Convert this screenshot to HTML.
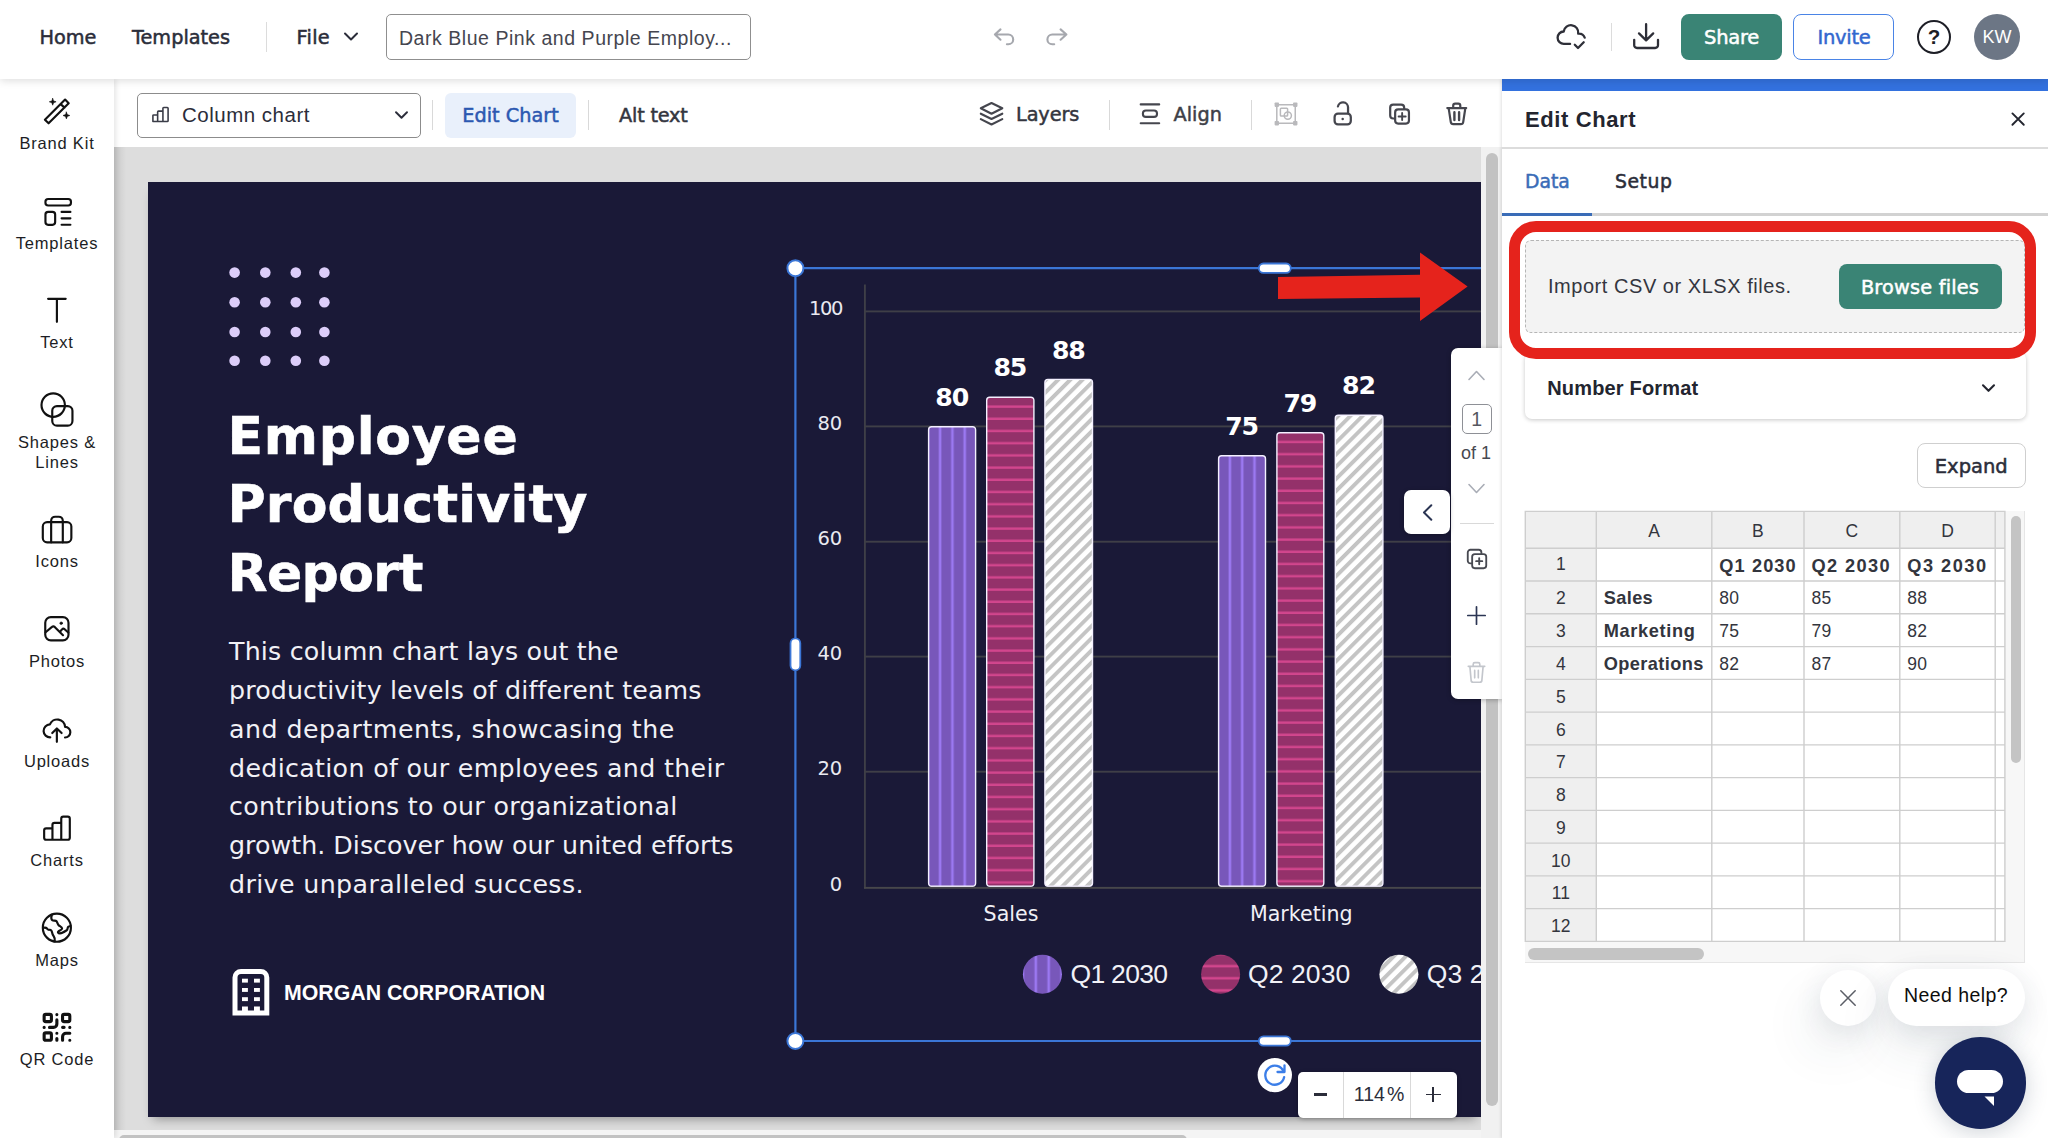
<!DOCTYPE html>
<html lang="en">
<head>
<meta charset="utf-8">
<title>Edit Chart</title>
<style>
*{box-sizing:border-box;margin:0;padding:0}
html,body{width:2048px;height:1138px;overflow:hidden;background:#fff}
body{position:relative;font-family:"Liberation Sans",sans-serif;color:#2b2d3a}
.a{position:absolute}
.t{position:absolute;white-space:nowrap;line-height:1}
.dj{font-family:"DejaVu Sans","Liberation Sans",sans-serif}
.m{font-family:"DejaVu Sans","Liberation Sans",sans-serif;-webkit-text-stroke:0.5px currentColor}
svg{position:absolute;overflow:visible}
.ic{fill:none;stroke:#2b2d3a;stroke-width:1.6;stroke-linecap:round;stroke-linejoin:round}

/* ---------- frame ---------- */
#topbar{left:0;top:0;width:2048px;height:79px;background:#fff;box-shadow:0 2px 8px rgba(0,0,0,.13);z-index:30}
#sidebar{left:0;top:79px;width:114px;height:1059px;background:#fff;z-index:20;box-shadow:2px 0 5px rgba(0,0,0,.10)}
#toolbar{left:114px;top:79px;width:1388px;height:68px;background:#fff;z-index:10}
#canvas{left:114px;top:147px;width:1388px;height:991px;background:#dddddd;overflow:hidden}
#panel{left:1502px;top:79px;width:546px;height:1059px;background:#fff;z-index:15;box-shadow:-1px 0 3px rgba(0,0,0,.12)}

.sb{position:absolute;left:0;width:114px;text-align:center;font-size:16.5px;color:#1c1d24;line-height:20px;letter-spacing:.8px}
</style>
</head>
<body>

<!-- ================= TOP BAR ================= -->
<div id="topbar" class="a">
  <div class="t m" style="left:39.5px;top:28.1px;font-size:19.3px;color:#2b2d3a">Home</div>
  <div class="t m" style="left:132px;top:28.1px;font-size:19.3px;color:#2b2d3a">Templates</div>
  <div class="a" style="left:266px;top:22px;width:1px;height:30px;background:#dcdcdc"></div>
  <div class="t m" style="left:296.5px;top:28.1px;font-size:19.3px;color:#2b2d3a;letter-spacing:0.3px">File</div>
  <svg style="left:343px;top:31px" width="16" height="12" viewBox="0 0 16 12"><path class="ic" style="stroke-width:2" d="M2 2.5 L8 8.5 L14 2.5"/></svg>
  <div class="a" style="left:386px;top:14px;width:365px;height:46px;border:1.5px solid #8f8f8f;border-radius:5px"></div>
  <div class="t" style="left:399px;top:28.8px;font-size:19.5px;color:#45464f;letter-spacing:0.54px">Dark Blue Pink and Purple Employ...</div>

  <!-- undo / redo -->
  <svg style="left:993px;top:27px" width="24" height="20" viewBox="0 0 24 20"><path class="ic" style="stroke:#a6a8ae;stroke-width:2.1" d="M7.5 2.4 L1.9 7.5 L7.5 12.7 M1.9 7.5 H15.3 a4.9 4.9 0 0 1 0 9.8 H13.9"/></svg>
  <svg style="left:1045px;top:27px" width="24" height="20" viewBox="0 0 24 20"><path class="ic" style="stroke:#a6a8ae;stroke-width:2.1" d="M15.6 2.4 L21.4 7.5 L15.6 12.7 M21.4 7.5 H7.3 a4.9 4.9 0 0 0 0 9.8 H9.2"/></svg>

  <!-- cloud saved -->
  <svg style="left:1555px;top:23px" width="34" height="28" viewBox="0 0 34 28"><path class="ic" style="stroke-width:2.3;stroke:#2e2f38" d="M15.1 20.9 H8.9 A6.2 6.2 0 0 1 8.7 8.5 A7.3 7.3 0 0 1 23.2 10.6 A6.3 6.3 0 0 1 29.7 14.6"/><path class="ic" style="stroke-width:2.3;stroke:#2e2f38" d="M19.8 21.8 L23 25 L28.7 19.3"/></svg>
  <div class="a" style="left:1611px;top:23px;width:1px;height:28px;background:#dcdcdc"></div>
  <!-- download -->
  <svg style="left:1632px;top:22px" width="28" height="30" viewBox="0 0 28 30"><path class="ic" style="stroke-width:2.3;stroke:#2e2f38" d="M14.1 2.2 V18.2 M7 11.4 L14.1 18.4 L21.2 11.4 M2.2 17.8 V23.2 a2.8 2.8 0 0 0 2.8 2.8 H23.2 a2.8 2.8 0 0 0 2.8 -2.8 V17.8"/></svg>

  <div class="a" style="left:1681px;top:14.3px;width:100.7px;height:45.4px;background:#3a8475;border-radius:8px"></div>
  <div class="t m" style="left:1681.5px;width:100px;text-align:center;top:27.8px;font-size:19.5px;color:#fff;letter-spacing:-0.3px">Share</div>
  <div class="a" style="left:1792.7px;top:14.3px;width:101.8px;height:45.4px;background:#fff;border:1.8px solid #4a84e6;border-radius:8px"></div>
  <div class="t m" style="left:1793.5px;width:101px;text-align:center;top:27.8px;font-size:19.5px;color:#3267cf;letter-spacing:-0.25px">Invite</div>

  <div class="a" style="left:1917px;top:20px;width:34px;height:34px;border:2px solid #1d1e26;border-radius:50%"></div>
  <div class="t" style="left:1917px;width:34px;text-align:center;top:27px;font-size:20.5px;font-weight:bold;color:#1d1e26">?</div>
  <div class="a" style="left:1974px;top:14px;width:46px;height:46px;border-radius:50%;background:#6c7685"></div>
  <div class="t" style="left:1974px;width:46px;text-align:center;top:28px;font-size:18px;color:#fff;letter-spacing:0px">KW</div>
</div>

<!-- ================= SIDEBAR ================= -->
<div id="sidebar" class="a">
  <svg style="left:0;top:-79px" width="114" height="1138" viewBox="0 0 114 1138"><g fill="none" stroke="#111" stroke-width="2.15" stroke-linecap="round" stroke-linejoin="round">
    <!-- brand kit -->
    <path d="M44.9 119.7 L65.1 99.6 L68.7 103.2 L48.6 123.3 Z M60.6 104.1 L64.6 107.6"/>
    <path d="M52.7 98.4 l.9 2.5 l2.5 .9 l-2.5 .9 l-.9 2.5 l-.9 -2.5 l-2.5 -.9 l2.5 -.9z M66.4 112.1 l.9 2.5 l2.5 .9 l-2.5 .9 l-.9 2.5 l-.9 -2.5 l-2.5 -.9 l2.5 -.9z" fill="#111" stroke-width=".6"/>
    <!-- templates -->
    <rect x="45.45" y="198.95" width="25.5" height="6.5" rx="2.7"/>
    <rect x="45.45" y="211.8" width="9.7" height="13" rx="2.7"/>
    <path d="M61.6 211.9 H70.4 M61.6 218.3 H70.4 M61.6 224.7 H70.4"/>
    <!-- text -->
    <path d="M48.1 298.8 H65.7 M56.9 298.8 V321.8"/>
    <!-- shapes -->
    <circle cx="53.2" cy="405.1" r="11.7"/>
    <rect x="52.25" y="406.1" width="20.2" height="19.5" rx="4.7"/>
    <!-- icons -->
    <rect x="42.8" y="522.15" width="28.55" height="20.2" rx="4.3"/>
    <path d="M51.15 542.3 V520.7 a4 4 0 0 1 4 -4 h3.65 a4 4 0 0 1 4 4 V542.3"/>
    <!-- photos -->
    <rect x="45.25" y="617.1" width="23.25" height="23.25" rx="5.6"/>
    <path d="M45.6 632.3 L52 626.9 a2 2 0 0 1 2.7 0 L63 635.2 M60.4 631.3 L62 629.4 a2 2 0 0 1 2.6 -.2 L68.3 632.5"/>
    <circle cx="61.2" cy="623.2" r="1.3" fill="#111" stroke-width=".6"/>
    <!-- uploads -->
    <path d="M50.3 737.4 A6.5 6.5 0 0 1 49.9 724.4 A7.9 7.9 0 0 1 65.1 726.9 A5.3 5.3 0 0 1 65 737.5"/>
    <path d="M56.86 741.8 V728.7 M52.25 733.1 L56.86 728.5 L61.6 733.1"/>
    <!-- charts -->
    <path d="M44.15 837.7 V830.3 a2 2 0 0 1 2 -2 H52.45 V839.7 H46.15 a2 2 0 0 1 -2 -2 Z M52.45 839.7 V824.8 a2 2 0 0 1 2 -2 H61.25 V839.7 Z M61.25 839.7 V818.65 a2 2 0 0 1 2 -2 H67.8 a2 2 0 0 1 2 2 V837.7 a2 2 0 0 1 -2 2 Z"/>
    <!-- maps -->
    <circle cx="56.86" cy="927.7" r="14.05"/>
    <path d="M51.8 914.9 C51.2 917 51 919.3 52.2 920.2 C53.5 921.2 55.5 920 56.6 921.3 C57.7 922.7 57.6 924.3 58.8 925.3 C60 926.3 62.3 927.1 62.1 928.6 C61.9 930.2 57.3 931 58 932.4 C58.7 933.8 61 933.5 62.3 932.8 C63.8 932 65.5 931 66.7 930.3 C68 929.5 67.2 927.8 68.2 926.9 C68.9 926.3 69.8 926.1 70.5 926"/>
    <path d="M43.4 927.9 C44.8 927.5 46.2 927.6 47 928.5 C47.8 929.5 48 930 49.5 929.8 C51 929.6 51.8 931 52.1 932.5 C52.4 934.3 52.6 935 53.7 936.3 C54.8 937.6 54.9 939.5 54.7 941.3"/>
    <!-- qr -->
    <g stroke-width="3.1">
    <rect x="44.15" y="1014.4" width="7.25" height="7.25" rx="1.6"/>
    <rect x="62.55" y="1014.4" width="7.25" height="7.25" rx="1.6"/>
    <rect x="44.15" y="1032.9" width="7.25" height="7.4" rx="1.6"/>
    <path d="M56.86 1014.6 v.01 M56.86 1019.9 V1024 a3.4 3.4 0 0 1 -3.4 3.4 H49.5 M44.15 1027.37 v.01 M62.6 1027.37 H64.1 M69.8 1027.37 v.01 M56.86 1033.3 v.01 M56.86 1038.6 V1040.3 M62.57 1040.3 V1036.7 a3.4 3.4 0 0 1 3.4 -3.4 H69.8 M69.8 1040.3 v.01"/>
    </g>
  </g></svg>
  <div class="sb" style="top:54px">Brand Kit</div>
  <div class="sb" style="top:154px">Templates</div>
  <div class="sb" style="top:253px">Text</div>
  <div class="sb" style="top:353px">Shapes &amp;<br>Lines</div>
  <div class="sb" style="top:472px">Icons</div>
  <div class="sb" style="top:572px">Photos</div>
  <div class="sb" style="top:672px">Uploads</div>
  <div class="sb" style="top:771px">Charts</div>
  <div class="sb" style="top:871px">Maps</div>
  <div class="sb" style="top:970px">QR Code</div>
</div>

<!-- ================= TOOLBAR ================= -->
<div id="toolbar" class="a">
  <div class="a" style="left:23px;top:14px;width:284px;height:45px;border:1.5px solid #8c8c8c;border-radius:5px"></div>
  <svg style="left:38px;top:27px" width="17" height="17" viewBox="0 0 28 26"><path class="ic" style="stroke-width:2.6;stroke:#3a3c47" d="M1.5 24.5 V15 a1.3 1.3 0 0 1 1.3 -1.3 H9.3 V24.5 M9.3 24.5 V8.8 a1.3 1.3 0 0 1 1.3 -1.3 H18 V24.5 M18 24.5 V2.8 a1.3 1.3 0 0 1 1.3 -1.3 H25.2 a1.3 1.3 0 0 1 1.3 1.3 V23.2 a1.3 1.3 0 0 1 -1.3 1.3 H1.5 Z"/></svg>
  <div class="t" style="left:68px;top:26.2px;font-size:20.5px;color:#2b2d3a;letter-spacing:0.5px">Column chart</div>
  <svg style="left:280px;top:31px" width="15" height="11" viewBox="0 0 16 12"><path class="ic" style="stroke-width:2.1" d="M2 2.5 L8 8.5 L14 2.5"/></svg>
  <div class="a" style="left:318px;top:21px;width:1px;height:30px;background:#d9d9d9"></div>

  <div class="a" style="left:331px;top:14px;width:131px;height:45px;background:#e9f0fb;border-radius:6px"></div>
  <div class="t m" style="left:331px;width:131px;text-align:center;top:26.7px;font-size:19.3px;color:#2c58b1">Edit Chart</div>
  <div class="a" style="left:474px;top:21px;width:1px;height:30px;background:#d9d9d9"></div>
  <div class="t m" style="left:505px;top:26.7px;font-size:19.3px;color:#34363f;letter-spacing:-0.2px">Alt text</div>
  
  <div class="t m" style="left:902px;top:25.7px;font-size:19.3px;color:#34363f;letter-spacing:-0.1px">Layers</div>
  <div class="a" style="left:995px;top:21px;width:1px;height:30px;background:#d9d9d9"></div>
  
  <div class="t m" style="left:1059.5px;top:25.7px;font-size:19.3px;color:#3e3f47">Align</div>
  <div class="a" style="left:1137px;top:21px;width:1px;height:30px;background:#d9d9d9"></div>
  
  <svg style="left:-114px;top:-79px" width="1616" height="147" viewBox="0 0 1616 147"><g fill="none" stroke="#45464e" stroke-width="2.1" stroke-linecap="round" stroke-linejoin="round">
    <path d="M980.8 108.3 L991.5 103 L1002.3 108.3 L991.5 113.7 Z M980.8 113.7 L991.5 119 L1002.3 113.7 M980.8 119.1 L991.5 124.5 L1002.3 119.1"/>
    <path d="M1140.7 104.4 H1159.2 M1140.7 123.2 H1159.2"/><rect x="1142.9" y="110.5" width="14.1" height="6.4" rx="3"/>
    <g stroke="#b9b9bc" stroke-width="1.5"><rect x="1276.8" y="104.7" width="18.45" height="18.5"/><rect x="1280.4" y="108.3" width="7.2" height="7.7" rx=".8"/><circle cx="1287.8" cy="115.6" r="3.6"/>
      <g fill="#b9b9bc" stroke="none"><rect x="1274.6" y="102.5" width="4.4" height="4.4" rx=".8"/><rect x="1293.05" y="102.5" width="4.4" height="4.4" rx=".8"/><rect x="1274.6" y="121" width="4.4" height="4.4" rx=".8"/><rect x="1293.05" y="121" width="4.4" height="4.4" rx=".8"/></g></g>
    <rect x="1334.6" y="113.55" width="16.2" height="10.8" rx="3.4" stroke-width="2.25"/><path d="M1348.05 113.2 V107.3 a5.1 5.1 0 0 0 -10.1 -.9" stroke-width="2.25"/><circle cx="1342.7" cy="118.9" r="1.25" fill="#45464e" stroke="none"/>
    <path d="M1394.6 118.5 H1393.2 a3 3 0 0 1 -3 -3 V107.55 a3 3 0 0 1 3 -3 H1401.15 a3 3 0 0 1 3 3 V108.9" stroke-width="2.2"/><rect x="1395.15" y="109.45" width="13.8" height="14.15" rx="3" stroke-width="2.2"/><path d="M1402.15 113 V120.1 M1398.6 116.55 H1405.7" stroke-width="1.9"/>
    <path d="M1447.3 108.1 H1466.2 M1453.2 107.8 V105.7 a2 2 0 0 1 2 -2 h3.1 a2 2 0 0 1 2 2 V107.8 M1448.7 108.3 L1450.8 122.1 a2.5 2.5 0 0 0 2.5 2.1 h7.4 a2.5 2.5 0 0 0 2.5 -2.1 L1465.3 108.3" stroke-width="2.2"/><path d="M1454.4 112.2 V120 M1459.1 112.2 V120" stroke-width="2.4"/>
  </g></svg>
</div>

<!-- ================= CANVAS ================= -->
<div id="canvas" class="a">
<!--CS-->
  <div class="a" style="left:-114px;top:-147px;width:2048px;height:1138px">
  <div class="a" style="left:114px;top:147px;width:12px;height:991px;background:linear-gradient(90deg,rgba(0,0,0,.10),rgba(0,0,0,0))"></div>
  <div class="a" style="left:148px;top:182px;width:1333px;height:935px;background:#1a1937;box-shadow:0 7px 10px -5px rgba(0,0,0,.35)"></div>
  <svg style="left:0;top:0" width="2048" height="1138" viewBox="0 0 2048 1138">
   <defs>
    <pattern id="p1" patternUnits="userSpaceOnUse" x="927.8" y="0" width="12.3" height="12.3"><rect width="12.3" height="12.3" fill="#7857ba"/><rect x="11" y="0" width="2.6" height="12.3" fill="#9b78f1"/><rect x="-1.3" y="0" width="2.6" height="12.3" fill="#9b78f1"/></pattern>
    <pattern id="p1b" patternUnits="userSpaceOnUse" x="1217.6" y="0" width="12.3" height="12.3"><rect width="12.3" height="12.3" fill="#7857ba"/><rect x="11" y="0" width="2.6" height="12.3" fill="#9b78f1"/><rect x="-1.3" y="0" width="2.6" height="12.3" fill="#9b78f1"/></pattern>
    <pattern id="p2" patternUnits="userSpaceOnUse" x="0" y="395.6" width="12.2" height="12.2"><rect width="12.2" height="12.2" fill="#94316a"/><rect x="0" y="9.8" width="12.2" height="2.6" fill="#d2468d"/></pattern>
    <pattern id="p2b" patternUnits="userSpaceOnUse" x="0" y="431" width="12.2" height="12.2"><rect width="12.2" height="12.2" fill="#94316a"/><rect x="0" y="9.8" width="12.2" height="2.6" fill="#d2468d"/></pattern>
    <pattern id="p3" patternUnits="userSpaceOnUse" x="1044" y="379" width="8.6" height="8.6" patternTransform="rotate(-45 1044 379)"><rect width="8.6" height="8.6" fill="#ffffff"/><rect x="0" y="0" width="8.6" height="3.9" fill="#c4c4c4"/></pattern>
    <pattern id="p1L" patternUnits="userSpaceOnUse" x="1035.8" y="0" width="12.9" height="12.9"><rect width="12.9" height="12.9" fill="#7857ba"/><rect x="11.6" y="0" width="2.6" height="12.9" fill="#9b78f1"/><rect x="-1.3" y="0" width="2.6" height="12.9" fill="#9b78f1"/></pattern>
    <pattern id="p2L" patternUnits="userSpaceOnUse" x="0" y="955.3" width="12.1" height="12.1"><rect width="12.1" height="12.1" fill="#94316a"/><rect x="0" y="9.6" width="12.1" height="2.6" fill="#d2468d"/></pattern>
    <clipPath id="slideclip"><rect x="148" y="182" width="1333" height="935"/></clipPath>
   </defs>
   <g clip-path="url(#slideclip)">
    <circle cx="234.6" cy="272.6" r="5.3" fill="#dccdf9"/>
    <circle cx="265.3" cy="272.6" r="5.3" fill="#dccdf9"/>
    <circle cx="295.8" cy="272.6" r="5.3" fill="#dccdf9"/>
    <circle cx="324.4" cy="272.6" r="5.3" fill="#dccdf9"/>
    <circle cx="234.6" cy="302.2" r="5.3" fill="#dccdf9"/>
    <circle cx="265.3" cy="302.2" r="5.3" fill="#dccdf9"/>
    <circle cx="295.8" cy="302.2" r="5.3" fill="#dccdf9"/>
    <circle cx="324.4" cy="302.2" r="5.3" fill="#dccdf9"/>
    <circle cx="234.6" cy="332" r="5.3" fill="#dccdf9"/>
    <circle cx="265.3" cy="332" r="5.3" fill="#dccdf9"/>
    <circle cx="295.8" cy="332" r="5.3" fill="#dccdf9"/>
    <circle cx="324.4" cy="332" r="5.3" fill="#dccdf9"/>
    <circle cx="234.6" cy="360.8" r="5.3" fill="#dccdf9"/>
    <circle cx="265.3" cy="360.8" r="5.3" fill="#dccdf9"/>
    <circle cx="295.8" cy="360.8" r="5.3" fill="#dccdf9"/>
    <circle cx="324.4" cy="360.8" r="5.3" fill="#dccdf9"/>
    <path d="M235 1013.1 V977.6 a6 6 0 0 1 6 -6 h19.8 a6 6 0 0 1 6 6 V1013.1 Z" fill="none" stroke="#fff" stroke-width="5"/>
    <rect x="242" y="978.7" width="5.9" height="3.9" fill="#fff"/>
    <rect x="254" y="978.7" width="5.9" height="3.9" fill="#fff"/>
    <rect x="242" y="988" width="5.9" height="3.9" fill="#fff"/>
    <rect x="254" y="988" width="5.9" height="3.9" fill="#fff"/>
    <rect x="242" y="997.2" width="5.9" height="3.9" fill="#fff"/>
    <rect x="254" y="997.2" width="5.9" height="3.9" fill="#fff"/>
    <rect x="242" y="1006.5" width="5.9" height="5" fill="#fff"/>
    <rect x="254" y="1006.5" width="5.9" height="5" fill="#fff"/>
    <rect x="865" y="310.45" width="640" height="1.9" fill="#3f3f47"/>
    <rect x="865" y="425.45" width="640" height="1.9" fill="#3f3f47"/>
    <rect x="865" y="540.75" width="640" height="1.9" fill="#3f3f47"/>
    <rect x="865" y="655.65" width="640" height="1.9" fill="#3f3f47"/>
    <rect x="865" y="770.75" width="640" height="1.9" fill="#3f3f47"/>
    <rect x="863.95" y="284.5" width="1.9" height="604" fill="#3f3f47"/>
    <path d="M928.6 883.3 V429.7 a3 3 0 0 1 3 -3 H972.6 a3 3 0 0 1 3 3 V883.3 a3 3 0 0 1 -3 3 H931.6 a3 3 0 0 1 -3 -3 Z" fill="url(#p1)" stroke="#f4f0ff" stroke-width="1.4"/>
    <path d="M986.7 883.3 V400.2 a3 3 0 0 1 3 -3 H1030.9 a3 3 0 0 1 3 3 V883.3 a3 3 0 0 1 -3 3 H989.7 a3 3 0 0 1 -3 -3 Z" fill="url(#p2)" stroke="#f4f0ff" stroke-width="1.4"/>
    <path d="M1044.9 883.3 V382.4 a3 3 0 0 1 3 -3 H1089.5 a3 3 0 0 1 3 3 V883.3 a3 3 0 0 1 -3 3 H1047.9 a3 3 0 0 1 -3 -3 Z" fill="url(#p3)" stroke="#f4f0ff" stroke-width="1.4"/>
    <path d="M1218.6 883.3 V458.7 a3 3 0 0 1 3 -3 H1262.5 a3 3 0 0 1 3 3 V883.3 a3 3 0 0 1 -3 3 H1221.6 a3 3 0 0 1 -3 -3 Z" fill="url(#p1b)" stroke="#f4f0ff" stroke-width="1.4"/>
    <path d="M1276.9 883.3 V435.7 a3 3 0 0 1 3 -3 H1320.8 a3 3 0 0 1 3 3 V883.3 a3 3 0 0 1 -3 3 H1279.9 a3 3 0 0 1 -3 -3 Z" fill="url(#p2b)" stroke="#f4f0ff" stroke-width="1.4"/>
    <path d="M1335.3 883.3 V418.3 a3 3 0 0 1 3 -3 H1379.9 a3 3 0 0 1 3 3 V883.3 a3 3 0 0 1 -3 3 H1338.3 a3 3 0 0 1 -3 -3 Z" fill="url(#p3)" stroke="#f4f0ff" stroke-width="1.4"/>
    <rect x="864" y="886.9" width="641" height="1.9" fill="#47474b"/>
    <circle cx="1042.4" cy="974.2" r="19.5" fill="url(#p1L)"/>
    <circle cx="1220.6" cy="974.2" r="19.5" fill="url(#p2L)"/>
    <circle cx="1398.9" cy="974.2" r="19.5" fill="url(#p3)"/>
    <path d="M1490 268.2 H795.4 V1041 H1490" fill="none" stroke="#3b76d6" stroke-width="2.2"/>
   </g>
   <circle cx="795.4" cy="268.2" r="8" fill="#fff" stroke="#3b76d6" stroke-width="2"/>
   <rect x="1258.8" y="263.5" width="32" height="9.4" rx="4.7" fill="#fff" stroke="#3b76d6" stroke-width="1.8"/>
   <circle cx="795.4" cy="1041" r="8" fill="#fff" stroke="#3b76d6" stroke-width="2"/>
   <rect x="1258.8" y="1036.3" width="32" height="9.4" rx="4.7" fill="#fff" stroke="#3b76d6" stroke-width="1.8"/>
   <rect x="790.5" y="638.3" width="9.8" height="32" rx="4.9" fill="#fff" stroke="#3b76d6" stroke-width="1.8"/>
   <path d="M1278 276.9 L1420 274.7 L1420 252.5 L1467.6 286.4 L1420 321 L1420 297.5 L1278 299.1 Z" fill="#e5231c"/>
   <circle cx="1274.8" cy="1075.1" r="17.2" fill="#fff"/>
   <path d="M1284.1 1077.2 A9.5 9.5 0 1 1 1283.6 1071.6 M1284.5 1065.3 V1072 H1277.5" fill="none" stroke="#3b7ee8" stroke-width="2.3" stroke-linecap="round" stroke-linejoin="round"/>
  </svg>
  <div class="t dj" style="left:227.5px;top:402.1px;font-size:52px;line-height:68.35px;font-weight:bold;color:#fff;letter-spacing:0.75px;-webkit-text-stroke:.6px #fff">Employee</div>
  <div class="t dj" style="left:227.5px;top:470.45px;font-size:52px;line-height:68.35px;font-weight:bold;color:#fff;letter-spacing:0.2px;-webkit-text-stroke:.6px #fff">Productivity</div>
  <div class="t dj" style="left:227.5px;top:538.8px;font-size:52px;line-height:68.35px;font-weight:bold;color:#fff;letter-spacing:-0.6px;-webkit-text-stroke:.6px #fff">Report</div>
  <div class="t dj" style="left:229px;top:631.7px;font-size:25.3px;line-height:39px;color:#f1f1f6;letter-spacing:0.18px">This column chart lays out the</div>
  <div class="t dj" style="left:229px;top:670.6px;font-size:25.3px;line-height:39px;color:#f1f1f6;letter-spacing:0.13px">productivity levels of different teams</div>
  <div class="t dj" style="left:229px;top:709.6px;font-size:25.3px;line-height:39px;color:#f1f1f6;letter-spacing:0.47px">and departments, showcasing the</div>
  <div class="t dj" style="left:229px;top:748.5px;font-size:25.3px;line-height:39px;color:#f1f1f6;letter-spacing:0.32px">dedication of our employees and their</div>
  <div class="t dj" style="left:229px;top:787.4px;font-size:25.3px;line-height:39px;color:#f1f1f6;letter-spacing:0.31px">contributions to our organizational</div>
  <div class="t dj" style="left:229px;top:826.4px;font-size:25.3px;line-height:39px;color:#f1f1f6;letter-spacing:0.03px">growth. Discover how our united efforts</div>
  <div class="t dj" style="left:229px;top:865.3px;font-size:25.3px;line-height:39px;color:#f1f1f6;letter-spacing:0.37px">drive unparalleled success.</div>
  <div class="t" style="left:284px;top:983px;font-size:21.3px;font-weight:bold;color:#fff">MORGAN CORPORATION</div>
  <div class="t dj" style="left:741px;width:100.8px;text-align:right;top:298.9px;font-size:19.5px;color:#e9e9f0;letter-spacing:-1.5px">100</div>
  <div class="t dj" style="left:741px;width:100.8px;text-align:right;top:413.9px;font-size:19.5px;color:#e9e9f0;letter-spacing:-0.3px">80</div>
  <div class="t dj" style="left:741px;width:100.8px;text-align:right;top:529.2px;font-size:19.5px;color:#e9e9f0;letter-spacing:-0.3px">60</div>
  <div class="t dj" style="left:741px;width:100.8px;text-align:right;top:644.1px;font-size:19.5px;color:#e9e9f0;letter-spacing:-0.3px">40</div>
  <div class="t dj" style="left:741px;width:100.8px;text-align:right;top:759.2px;font-size:19.5px;color:#e9e9f0;letter-spacing:-0.3px">20</div>
  <div class="t dj" style="left:741px;width:100.8px;text-align:right;top:874.7px;font-size:19.5px;color:#e9e9f0;letter-spacing:-0.3px">0</div>
  <div class="t dj" style="left:911.7px;width:80px;text-align:center;top:384.8px;font-size:25.2px;font-weight:bold;color:#fff;letter-spacing:-1.2px">80</div>
  <div class="t dj" style="left:969.8px;width:80px;text-align:center;top:355.4px;font-size:25.2px;font-weight:bold;color:#fff;letter-spacing:-1.2px">85</div>
  <div class="t dj" style="left:1028.3px;width:80px;text-align:center;top:337.6px;font-size:25.2px;font-weight:bold;color:#fff;letter-spacing:-1.2px">88</div>
  <div class="t dj" style="left:1201.6px;width:80px;text-align:center;top:413.6px;font-size:25.2px;font-weight:bold;color:#fff;letter-spacing:-1.2px">75</div>
  <div class="t dj" style="left:1259.8px;width:80px;text-align:center;top:390.6px;font-size:25.2px;font-weight:bold;color:#fff;letter-spacing:-1.2px">79</div>
  <div class="t dj" style="left:1318.4px;width:80px;text-align:center;top:373.3px;font-size:25.2px;font-weight:bold;color:#fff;letter-spacing:-1.2px">82</div>
  <div class="t dj" style="left:931px;width:160px;text-align:center;top:903.5px;font-size:20.6px;color:#f1f1f6">Sales</div>
  <div class="t dj" style="left:1221.3px;width:160px;text-align:center;top:903.5px;font-size:20.6px;color:#f1f1f6">Marketing</div>
  <div class="t" style="left:1070.5px;top:960.5px;font-size:26.5px;color:#f1f1f6;letter-spacing:-.7px">Q1 2030</div>
  <div class="t" style="left:1248px;top:960.5px;font-size:26.5px;color:#f1f1f6;letter-spacing:.1px">Q2 2030</div>
  <div class="a" style="left:1426.7px;top:955px;width:54.3px;height:40px;overflow:hidden"><div class="t" style="left:0;top:5.5px;font-size:26.5px;color:#f1f1f6;letter-spacing:.1px">Q3 2030</div></div>
  <div class="a" style="left:1297.5px;top:1071.5px;width:159px;height:46px;background:#fff;border-radius:5px;box-shadow:0 1px 4px rgba(0,0,0,.3)"></div>
  <div class="a" style="left:1343px;top:1071.5px;width:1px;height:46px;background:#d9d9d9"></div>
  <div class="a" style="left:1410px;top:1071.5px;width:1px;height:46px;background:#d9d9d9"></div>
  <div class="a" style="left:1314px;top:1093.4px;width:13px;height:2.2px;background:#2b2d3a"></div>
  <div class="a" style="left:1426px;top:1093.6px;width:14.5px;height:1.8px;background:#2b2d3a"></div><div class="a" style="left:1432.4px;top:1087.3px;width:1.8px;height:14.5px;background:#2b2d3a"></div>
  <div class="t" style="left:1345.5px;width:67px;text-align:center;top:1085.2px;font-size:19.5px;color:#2b2d3a">114<span style="margin-left:2px">%</span></div>
  <div class="a" style="left:1481px;top:147px;width:21px;height:991px;background:#f1f1f1"></div>
  <div class="a" style="left:1486.3px;top:152.5px;width:11.7px;height:953px;background:#c2c2c2;border-radius:6px"></div>
  <div class="a" style="left:114px;top:1130px;width:1367px;height:8px;background:#f4f4f4"></div>
  <div class="a" style="left:119px;top:1135.4px;width:1068px;height:10px;background:#c2c2c2;border-radius:5px"></div>
  <div class="a" style="left:1451px;top:348px;width:52px;height:350.7px;background:#fff;border-radius:7px 0 0 7px;box-shadow:0 1px 5px rgba(0,0,0,.28)"></div>
  <svg style="left:1468px;top:370px" width="17" height="11" viewBox="0 0 17 11"><path class="ic" style="stroke:#a9adb6;stroke-width:1.6" d="M1 9.5 L8.5 1.5 L16 9.5"/></svg>
  <div class="a" style="left:1461.5px;top:404.3px;width:30.5px;height:30px;border:1.3px solid #8e9096;border-radius:5px"></div>
  <div class="t" style="left:1461.5px;width:30.5px;text-align:center;top:409.5px;font-size:19.5px;color:#55575f">1</div>
  <div class="t" style="left:1451px;width:50px;text-align:center;top:444px;font-size:18px;color:#474951">of 1</div>
  <svg style="left:1468px;top:483px" width="17" height="11" viewBox="0 0 17 11"><path class="ic" style="stroke:#a9adb6;stroke-width:1.6" d="M1 1.5 L8.5 9.5 L16 1.5"/></svg>
  <div class="a" style="left:1459.5px;top:523.2px;width:34px;height:1px;background:#d9d9d9"></div>
  <svg style="left:1465.5px;top:547.5px" width="22" height="22" viewBox="0 0 25 25"><path class="ic" style="stroke-width:2.1;stroke:#474951" d="M6.5 17.5 H5 a3 3 0 0 1 -3 -3 V5 a3 3 0 0 1 3 -3 H14.5 a3 3 0 0 1 3 3 V6.5"/><rect class="ic" style="stroke-width:2.1;stroke:#474951" x="7" y="7" width="16" height="16" rx="3"/><path class="ic" style="stroke-width:2.1;stroke:#474951" d="M15 11.5 V18.5 M11.5 15 H18.5"/></svg>
  <svg style="left:1467px;top:606.3px" width="19" height="19" viewBox="0 0 19 19"><path class="ic" style="stroke-width:1.7;stroke:#2b3553" d="M9.5 .8 V18.2 M.8 9.5 H18.2"/></svg>
  <svg style="left:1467px;top:661px" width="19" height="23" viewBox="0 0 23 27"><path class="ic" style="stroke-width:2;stroke:#c3c6cc" d="M1.5 6 H21.5 M7.5 6 V3.5 a2 2 0 0 1 2 -2 h4 a2 2 0 0 1 2 2 V6 M3.5 6 L5 23 a2.5 2.5 0 0 0 2.5 2.3 h8 a2.5 2.5 0 0 0 2.5 -2.3 L19.5 6 M9.3 11 V20 M13.7 11 V20"/></svg>
  <div class="a" style="left:1404px;top:489.6px;width:45.5px;height:44.5px;background:#fff;border-radius:7px;box-shadow:0 1px 4px rgba(0,0,0,.25)"></div>
  <svg style="left:1422px;top:503.5px" width="11" height="17" viewBox="0 0 11 17"><path class="ic" style="stroke-width:2;stroke:#2b3553" d="M9.3 1.2 L2 8.5 L9.3 15.8"/></svg>
  </div>
<!--CE-->
</div>

<!-- ================= PANEL ================= -->
<div id="panel" class="a">
  <div class="a" style="left:0;top:0;width:546px;height:12px;background:#3371de"></div>
  <div class="t" style="left:23px;top:30.2px;font-size:22px;font-weight:bold;color:#23252f;letter-spacing:0.6px">Edit Chart</div>
  <svg style="left:508.6px;top:32.7px" width="14.2" height="14.2" viewBox="0 0 15 15"><path class="ic" style="stroke-width:2;stroke:#23252f" d="M1.5 1.5 L13.5 13.5 M13.5 1.5 L1.5 13.5"/></svg>
  <div class="a" style="left:0;top:68px;width:546px;height:1.5px;background:#dcdcdc"></div>
  <div class="t m" style="left:23px;top:93.7px;font-size:18.8px;color:#3a6cb7">Data</div>
  <div class="t m" style="left:113px;top:93.7px;font-size:18.8px;color:#2b2d3a;letter-spacing:0.55px">Setup</div>
  <div class="a" style="left:0;top:134.3px;width:546px;height:3px;background:#d2d2d2"></div>
  <div class="a" style="left:0;top:134.3px;width:90.3px;height:3px;background:#3a6cb7"></div>
  <div class="a" style="left:23px;top:160.5px;width:500px;height:93px;background:#f3f3f3;border:1.5px dashed #b5b5b5;border-radius:6px"></div>
  <div class="t" style="left:46px;top:197.3px;font-size:20px;color:#34363f;letter-spacing:0.54px">Import CSV or XLSX files.</div>
  <div class="a" style="left:336.5px;top:184.5px;width:163px;height:45.5px;background:#3a8475;border-radius:8px"></div>
  <div class="t m" style="left:336.5px;width:163px;text-align:center;top:198.9px;font-size:19.3px;color:#fff;letter-spacing:0.2px">Browse files</div>
  <div class="a" style="left:23px;top:273px;width:501px;height:67px;background:#fff;border-radius:7px;box-shadow:0 1px 4px rgba(0,0,0,.22)"></div>
  <div class="t" style="left:45.2px;top:298.5px;font-size:20px;font-weight:bold;color:#23252f;letter-spacing:0.18px">Number Format</div>
  <svg style="left:479px;top:303.5px" width="15" height="11" viewBox="0 0 16 12"><path class="ic" style="stroke-width:2.3;stroke:#23252f" d="M2 2.5 L8 8.5 L14 2.5"/></svg>
  <div class="a" style="left:6.5px;top:141.5px;width:527.5px;height:138.3px;border:11.5px solid #e5231c;border-radius:27px"></div>
  <div class="a" style="left:415px;top:364px;width:108.5px;height:45px;background:#fff;border:1.5px solid #cfcfcf;border-radius:8px"></div>
  <div class="t m" style="left:415px;width:108.5px;text-align:center;top:377.7px;font-size:19.5px;color:#2b2d3a">Expand</div>
  <div class="a" style="left:23px;top:432px;width:500px;height:451.5px;background:#f7f7f7;border-right:1px solid #e6e6e6;border-bottom:1px solid #e6e6e6"></div>
  <div class="a" style="left:23.3px;top:432.4px;width:479.6px;height:430.0px;background:#fff"></div>
  <div class="a" style="left:23.3px;top:432.4px;width:479.6px;height:36.9px;background:#efefef"></div>
  <div class="a" style="left:23.3px;top:432.4px;width:71.0px;height:430.0px;background:#efefef"></div>
  <svg style="left:0;top:0" width="546" height="1059"><path d="M22.60 432.40H503.60M22.60 469.30H503.60M22.60 502.06H503.60M22.60 534.82H503.60M22.60 567.58H503.60M22.60 600.34H503.60M22.60 633.10H503.60M22.60 665.86H503.60M22.60 698.62H503.60M22.60 731.38H503.60M22.60 764.14H503.60M22.60 796.90H503.60M22.60 829.66H503.60M22.60 862.42H503.60M23.30 431.70V863.12M94.30 431.70V863.12M209.80 431.70V863.12M302.00 431.70V863.12M397.80 431.70V863.12M493.20 431.70V863.12M502.90 431.70V863.12" fill="none" stroke="#cecece" stroke-width="1.4"/></svg>
  <div class="t" style="top:443.9px;font-size:17.5px;color:#33353d;left:94.3px;width:115.5px;text-align:center;">A</div>
  <div class="t" style="top:443.9px;font-size:17.5px;color:#33353d;left:209.8px;width:92.2px;text-align:center;">B</div>
  <div class="t" style="top:443.9px;font-size:17.5px;color:#33353d;left:302.0px;width:95.8px;text-align:center;">C</div>
  <div class="t" style="top:443.9px;font-size:17.5px;color:#33353d;left:397.8px;width:95.4px;text-align:center;">D</div>
  <div class="t" style="top:476.93px;font-size:17.5px;color:#33353d;left:23.3px;width:71.0px;text-align:center;">1</div>
  <div class="t" style="top:511.49px;font-size:17.5px;color:#33353d;left:23.3px;width:71.0px;text-align:center;">2</div>
  <div class="t" style="top:544.25px;font-size:17.5px;color:#33353d;left:23.3px;width:71.0px;text-align:center;">3</div>
  <div class="t" style="top:577.01px;font-size:17.5px;color:#33353d;left:23.3px;width:71.0px;text-align:center;">4</div>
  <div class="t" style="top:609.77px;font-size:17.5px;color:#33353d;left:23.3px;width:71.0px;text-align:center;">5</div>
  <div class="t" style="top:642.53px;font-size:17.5px;color:#33353d;left:23.3px;width:71.0px;text-align:center;">6</div>
  <div class="t" style="top:675.29px;font-size:17.5px;color:#33353d;left:23.3px;width:71.0px;text-align:center;">7</div>
  <div class="t" style="top:708.05px;font-size:17.5px;color:#33353d;left:23.3px;width:71.0px;text-align:center;">8</div>
  <div class="t" style="top:740.81px;font-size:17.5px;color:#33353d;left:23.3px;width:71.0px;text-align:center;">9</div>
  <div class="t" style="top:773.57px;font-size:17.5px;color:#33353d;left:23.3px;width:71.0px;text-align:center;">10</div>
  <div class="t" style="top:806.33px;font-size:17.5px;color:#33353d;left:23.3px;width:71.0px;text-align:center;">11</div>
  <div class="t" style="top:839.09px;font-size:17.5px;color:#33353d;left:23.3px;width:71.0px;text-align:center;">12</div>
  <div class="t" style="top:478.13px;font-size:18.2px;color:#33353d;font-weight:bold;left:217.3px;;letter-spacing:1.1px">Q1 2030</div>
  <div class="t" style="top:478.13px;font-size:18.2px;color:#33353d;font-weight:bold;left:309.5px;;letter-spacing:1.4px">Q2 2030</div>
  <div class="t" style="top:478.13px;font-size:18.2px;color:#33353d;font-weight:bold;left:405.3px;;letter-spacing:1.5px">Q3 2030</div>
  <div class="t" style="top:510.39px;font-size:18.2px;color:#33353d;font-weight:bold;left:101.8px;;letter-spacing:0.35px">Sales</div>
  <div class="t" style="top:511.29px;font-size:17.5px;color:#33353d;left:217.3px;;letter-spacing:0.3px">80</div>
  <div class="t" style="top:511.29px;font-size:17.5px;color:#33353d;left:309.5px;;letter-spacing:0.3px">85</div>
  <div class="t" style="top:511.29px;font-size:17.5px;color:#33353d;left:405.3px;;letter-spacing:0.3px">88</div>
  <div class="t" style="top:543.15px;font-size:18.2px;color:#33353d;font-weight:bold;left:101.8px;;letter-spacing:0.65px">Marketing</div>
  <div class="t" style="top:544.05px;font-size:17.5px;color:#33353d;left:217.3px;;letter-spacing:0.3px">75</div>
  <div class="t" style="top:544.05px;font-size:17.5px;color:#33353d;left:309.5px;;letter-spacing:0.3px">79</div>
  <div class="t" style="top:544.05px;font-size:17.5px;color:#33353d;left:405.3px;;letter-spacing:0.3px">82</div>
  <div class="t" style="top:576.11px;font-size:18.2px;color:#33353d;font-weight:bold;left:101.8px;;letter-spacing:0.4px">Operations</div>
  <div class="t" style="top:576.81px;font-size:17.5px;color:#33353d;left:217.3px;;letter-spacing:0.3px">82</div>
  <div class="t" style="top:576.81px;font-size:17.5px;color:#33353d;left:309.5px;;letter-spacing:0.3px">87</div>
  <div class="t" style="top:576.81px;font-size:17.5px;color:#33353d;left:405.3px;;letter-spacing:0.3px">90</div>
  <div class="a" style="left:508.5px;top:436.5px;width:10px;height:247px;background:#c4c4c4;border-radius:5px"></div>
  <div class="a" style="left:26px;top:868.5px;width:176px;height:12px;background:#c4c4c4;border-radius:6px"></div>
  <div class="a" style="left:317.8px;top:890.5px;width:56.4px;height:56.4px;border-radius:50%;background:#fff;box-shadow:0 6px 28px rgba(40,60,80,.12),-14px 26px 50px rgba(40,60,80,.08)"></div>
  <svg style="left:338px;top:910.7px" width="16" height="16" viewBox="0 0 16 16"><path class="ic" style="stroke:#5b5e66;stroke-width:1.5" d="M.8 .8 L15.2 15.2 M15.2 .8 L.8 15.2"/></svg>
  <div class="a" style="left:385.7px;top:890px;width:137px;height:56.5px;border-radius:28.3px;background:#fff;box-shadow:0 6px 28px rgba(40,60,80,.12),-10px 26px 50px rgba(40,60,80,.08)"></div>
  <div class="t" style="left:402px;top:906.7px;font-size:19.5px;color:#0d0d0d;letter-spacing:0.44px">Need help?</div>
  <div class="a" style="left:432.5px;top:958.3px;width:91.4px;height:91.4px;border-radius:50%;background:#17255a;box-shadow:0 4px 22px rgba(40,60,80,.22)"></div>
  <div class="a" style="left:455.4px;top:990.5px;width:46px;height:23px;border-radius:11.5px;background:#fff"></div>
  <svg style="left:482px;top:1017.3px" width="11" height="11" viewBox="0 0 11 11"><path d="M.5 .5 H10 V10 Z" fill="#fff"/></svg>
</div>

</body>
</html>
